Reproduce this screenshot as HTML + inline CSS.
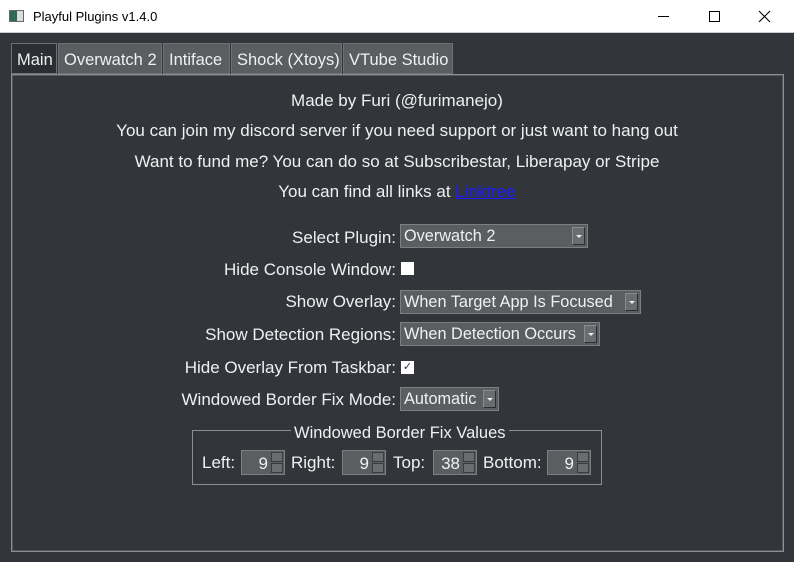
<!DOCTYPE html>
<html><head><meta charset="utf-8"><style>
*{margin:0;padding:0;box-sizing:border-box}
body{width:794px;height:562px;background:#32363a;font-family:"Liberation Sans",sans-serif;font-size:17px;color:#eef0f2;position:relative;overflow:hidden}
.a{position:absolute;white-space:nowrap}
.title{left:0;top:0;width:794px;height:33px;background:#fff;border-bottom:1px solid #ccc}
.tab{position:absolute;top:43px;height:31px;background:#5b5e61;border:1px solid #6e7174;line-height:32px;padding-left:5px;color:#eef0f2;font-size:16.5px}
.panel{position:absolute;left:11px;top:74px;width:773px;height:478px;border:1px solid #8c8f92;box-shadow:inset 0 0 0 1px #55595d}
.c{left:0;width:794px;text-align:center}
.lbl{text-align:right;right:398px}
.cb{position:absolute;height:24px;background:#5b5e61;border:1px solid #7c7f82;line-height:23px;padding-left:3px;font-size:16.3px}
.cb i{position:absolute;right:2px;top:2px;width:13px;height:18px;background:#6a6d70;border:1px solid #2c2f32;border-top-color:#8a8d90;border-left-color:#8a8d90}
.cb i:after{content:"";position:absolute;left:3px;top:7px;border:3px solid transparent;border-top:3px solid #eee}
.sp{position:absolute;top:450px;height:25px;background:#5b5e61;border:1px solid #7c7f82;text-align:right;padding-right:16px;line-height:25px;font-size:17px}
.sp i{position:absolute;right:1px;top:1px;width:12px;height:10px;background:#6a6d70;border:1px solid #3a3d40}
.sp b{position:absolute;right:1px;top:12px;width:12px;height:10px;background:#6a6d70;border:1px solid #3a3d40}
</style></head><body>
<div class="a title"></div>
<div class="a" style="left:9px;top:10px;width:15px;height:12px;border:1px solid #666;background:linear-gradient(90deg,#2f6a55 55%,#ddd 55%)"></div>
<div class="a" style="left:33px;top:9px;color:#000;font-size:13px">Playful Plugins v1.4.0</div>
<div class="a" style="left:658px;top:16px;width:11px;height:1px;background:#000"></div>
<div class="a" style="left:709px;top:11px;width:11px;height:11px;border:1px solid #000"></div>
<svg class="a" style="left:758px;top:10px" width="13" height="13"><path d="M1 1L12 12M12 1L1 12" stroke="#000" stroke-width="1.1"/></svg>

<div class="tab" style="left:11px;width:46px;background:#2b2f33;border-color:#6e7174">Main</div>
<div class="tab" style="left:58px;width:104px">Overwatch 2</div>
<div class="tab" style="left:163px;width:67px">Intiface</div>
<div class="tab" style="left:231px;width:111px">Shock (Xtoys)</div>
<div class="tab" style="left:343px;width:110px">VTube Studio</div>
<div class="panel"></div>

<div class="a c" style="top:91px">Made by Furi (@furimanejo)</div>
<div class="a c" style="top:121px">You can join my discord server if you need support or just want to hang out</div>
<div class="a c" style="top:152px">Want to fund me? You can do so at Subscribestar, Liberapay or Stripe</div>
<div class="a c" style="top:182px">You can find all links at <span style="color:#1a1aff;text-decoration:underline">Linktree</span></div>

<div class="a lbl" style="top:228px">Select Plugin:</div>
<div class="cb" style="left:400px;top:224px;width:188px">Overwatch 2<i></i></div>
<div class="a lbl" style="top:260px">Hide Console Window:</div>
<div class="a" style="left:401px;top:262px;width:13px;height:13px;background:#fff"></div>
<div class="a lbl" style="top:292px">Show Overlay:</div>
<div class="cb" style="left:400px;top:290px;width:241px">When Target App Is Focused<i></i></div>
<div class="a lbl" style="top:325px">Show Detection Regions:</div>
<div class="cb" style="left:400px;top:322px;width:200px">When Detection Occurs<i></i></div>
<div class="a lbl" style="top:358px">Hide Overlay From Taskbar:</div>
<div class="a" style="left:401px;top:361px;width:13px;height:13px;background:#fff;color:#333;font-size:11px;line-height:13px;text-align:center">✓</div>
<div class="a lbl" style="top:390px">Windowed Border Fix Mode:</div>
<div class="cb" style="left:400px;top:387px;width:99px">Automatic<i></i></div>

<div class="a" style="left:192px;top:430px;width:410px;height:55px;border:1px solid #8c8f92"></div>
<div class="a" style="left:291px;top:424px;background:#32363a;padding:0 3px;font-size:16.5px">Windowed Border Fix Values</div>
<div class="a" style="left:202px;top:453px">Left:</div>
<div class="sp" style="left:241px;width:44px">9<i></i><b></b></div>
<div class="a" style="left:291px;top:453px">Right:</div>
<div class="sp" style="left:342px;width:44px">9<i></i><b></b></div>
<div class="a" style="left:393px;top:453px">Top:</div>
<div class="sp" style="left:433px;width:44px">38<i></i><b></b></div>
<div class="a" style="left:483px;top:453px">Bottom:</div>
<div class="sp" style="left:547px;width:44px">9<i></i><b></b></div>
</body></html>
